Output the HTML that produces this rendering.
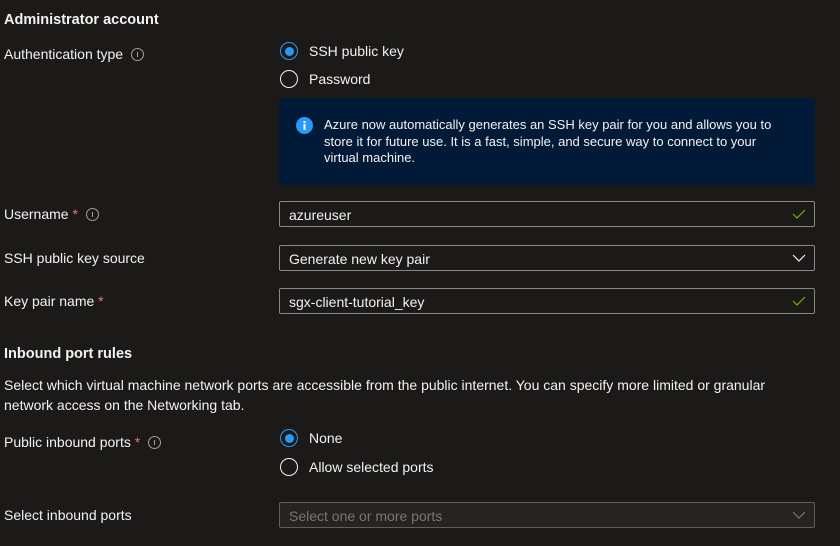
<!DOCTYPE html>
<html><head><meta charset="utf-8"><style>
body{margin:0;width:840px;height:546px;background:#1b1a19;color:#f3f2f1;font-family:"Liberation Sans",sans-serif;font-size:14px;position:relative;overflow:hidden}
.a{position:absolute;white-space:nowrap}
h{position:absolute;font-weight:bold;font-size:14.5px}
.req{color:#f1707b}
.inf{display:inline-block;width:11px;height:11px;border:1px solid #a19f9d;border-radius:50%;vertical-align:-2px;margin-left:8px;position:relative}
.inf:after{content:"";position:absolute;left:5px;top:3px;width:1px;height:5px;background:#a19f9d}
.r{position:absolute;width:18px;height:18px;border:1px solid #f3f2f1;border-radius:50%;box-sizing:border-box}
.r.on{border-color:#2899f5}
.r.on:after{content:"";position:absolute;left:3.5px;top:3.5px;width:9px;height:9px;border-radius:50%;background:#2899f5}
.box{position:absolute;left:279px;width:536px;height:26px;box-sizing:border-box;border:1px solid #8a8886;border-radius:2px;padding:5px 0 0 9px}
.ck{position:absolute;right:8px;top:5px}
</style></head><body>
<h style="left:4px;top:12px">Administrator account</h>
<div class="a" style="left:4px;top:46px">Authentication type<span class="inf"></span></div>
<div class="r on" style="left:280px;top:42px"></div><div class="a" style="left:309px;top:43px">SSH public key</div>
<div class="r" style="left:280px;top:70px"></div><div class="a" style="left:309px;top:71px">Password</div>
<div class="a" style="left:279px;top:98px;width:536px;height:87px;background:#001a38;border-radius:2px;white-space:normal">
<svg style="position:absolute;left:17px;top:19px" width="17" height="17"><circle cx="8.5" cy="8.5" r="8.5" fill="#2899f5"/><rect x="7.5" y="7" width="2" height="6" fill="#fff"/><rect x="7.5" y="4" width="2" height="2" fill="#fff"/></svg>
<div style="position:absolute;left:45px;top:19px;width:470px;font-size:13px;line-height:16.5px">Azure now automatically generates an SSH key pair for you and allows you to<br>store it for future use. It is a fast, simple, and secure way to connect to your<br>virtual machine.</div></div>
<div class="a" style="left:4px;top:206px">Username <span class="req">*</span><span class="inf"></span></div>
<div class="box" style="top:201px">azureuser<svg class="ck" width="14" height="14"><path d="M1 7l4 4 8-8" stroke="#6bb700" fill="none" stroke-width="1.2"/></svg></div>
<div class="a" style="left:4px;top:250px">SSH public key source</div>
<div class="box" style="top:245px">Generate new key pair<svg class="ck" width="14" height="14"><path d="M1 4l6 6 6-6" stroke="#f3f2f1" fill="none" stroke-width="1.2"/></svg></div>
<div class="a" style="left:4px;top:293px">Key pair name <span class="req">*</span></div>
<div class="box" style="top:288px">sgx-client-tutorial_key<svg class="ck" width="14" height="14"><path d="M1 7l4 4 8-8" stroke="#6bb700" fill="none" stroke-width="1.2"/></svg></div>
<h style="left:4px;top:346px">Inbound port rules</h>
<div class="a" style="left:4px;top:375px;line-height:20px">Select which virtual machine network ports are accessible from the public internet. You can specify more limited or granular<br>network access on the Networking tab.</div>
<div class="a" style="left:4px;top:434px">Public inbound ports <span class="req">*</span><span class="inf"></span></div>
<div class="r on" style="left:280px;top:429px"></div><div class="a" style="left:309px;top:430px">None</div>
<div class="r" style="left:280px;top:458px"></div><div class="a" style="left:309px;top:459px">Allow selected ports</div>
<div class="a" style="left:4px;top:507px">Select inbound ports</div>
<div class="box" style="top:502px;background:#252423;border-color:#605e5c;color:#797775">Select one or more ports<svg class="ck" width="14" height="14"><path d="M1 4l6 6 6-6" stroke="#797775" fill="none" stroke-width="1.2"/></svg></div>
</body></html>
